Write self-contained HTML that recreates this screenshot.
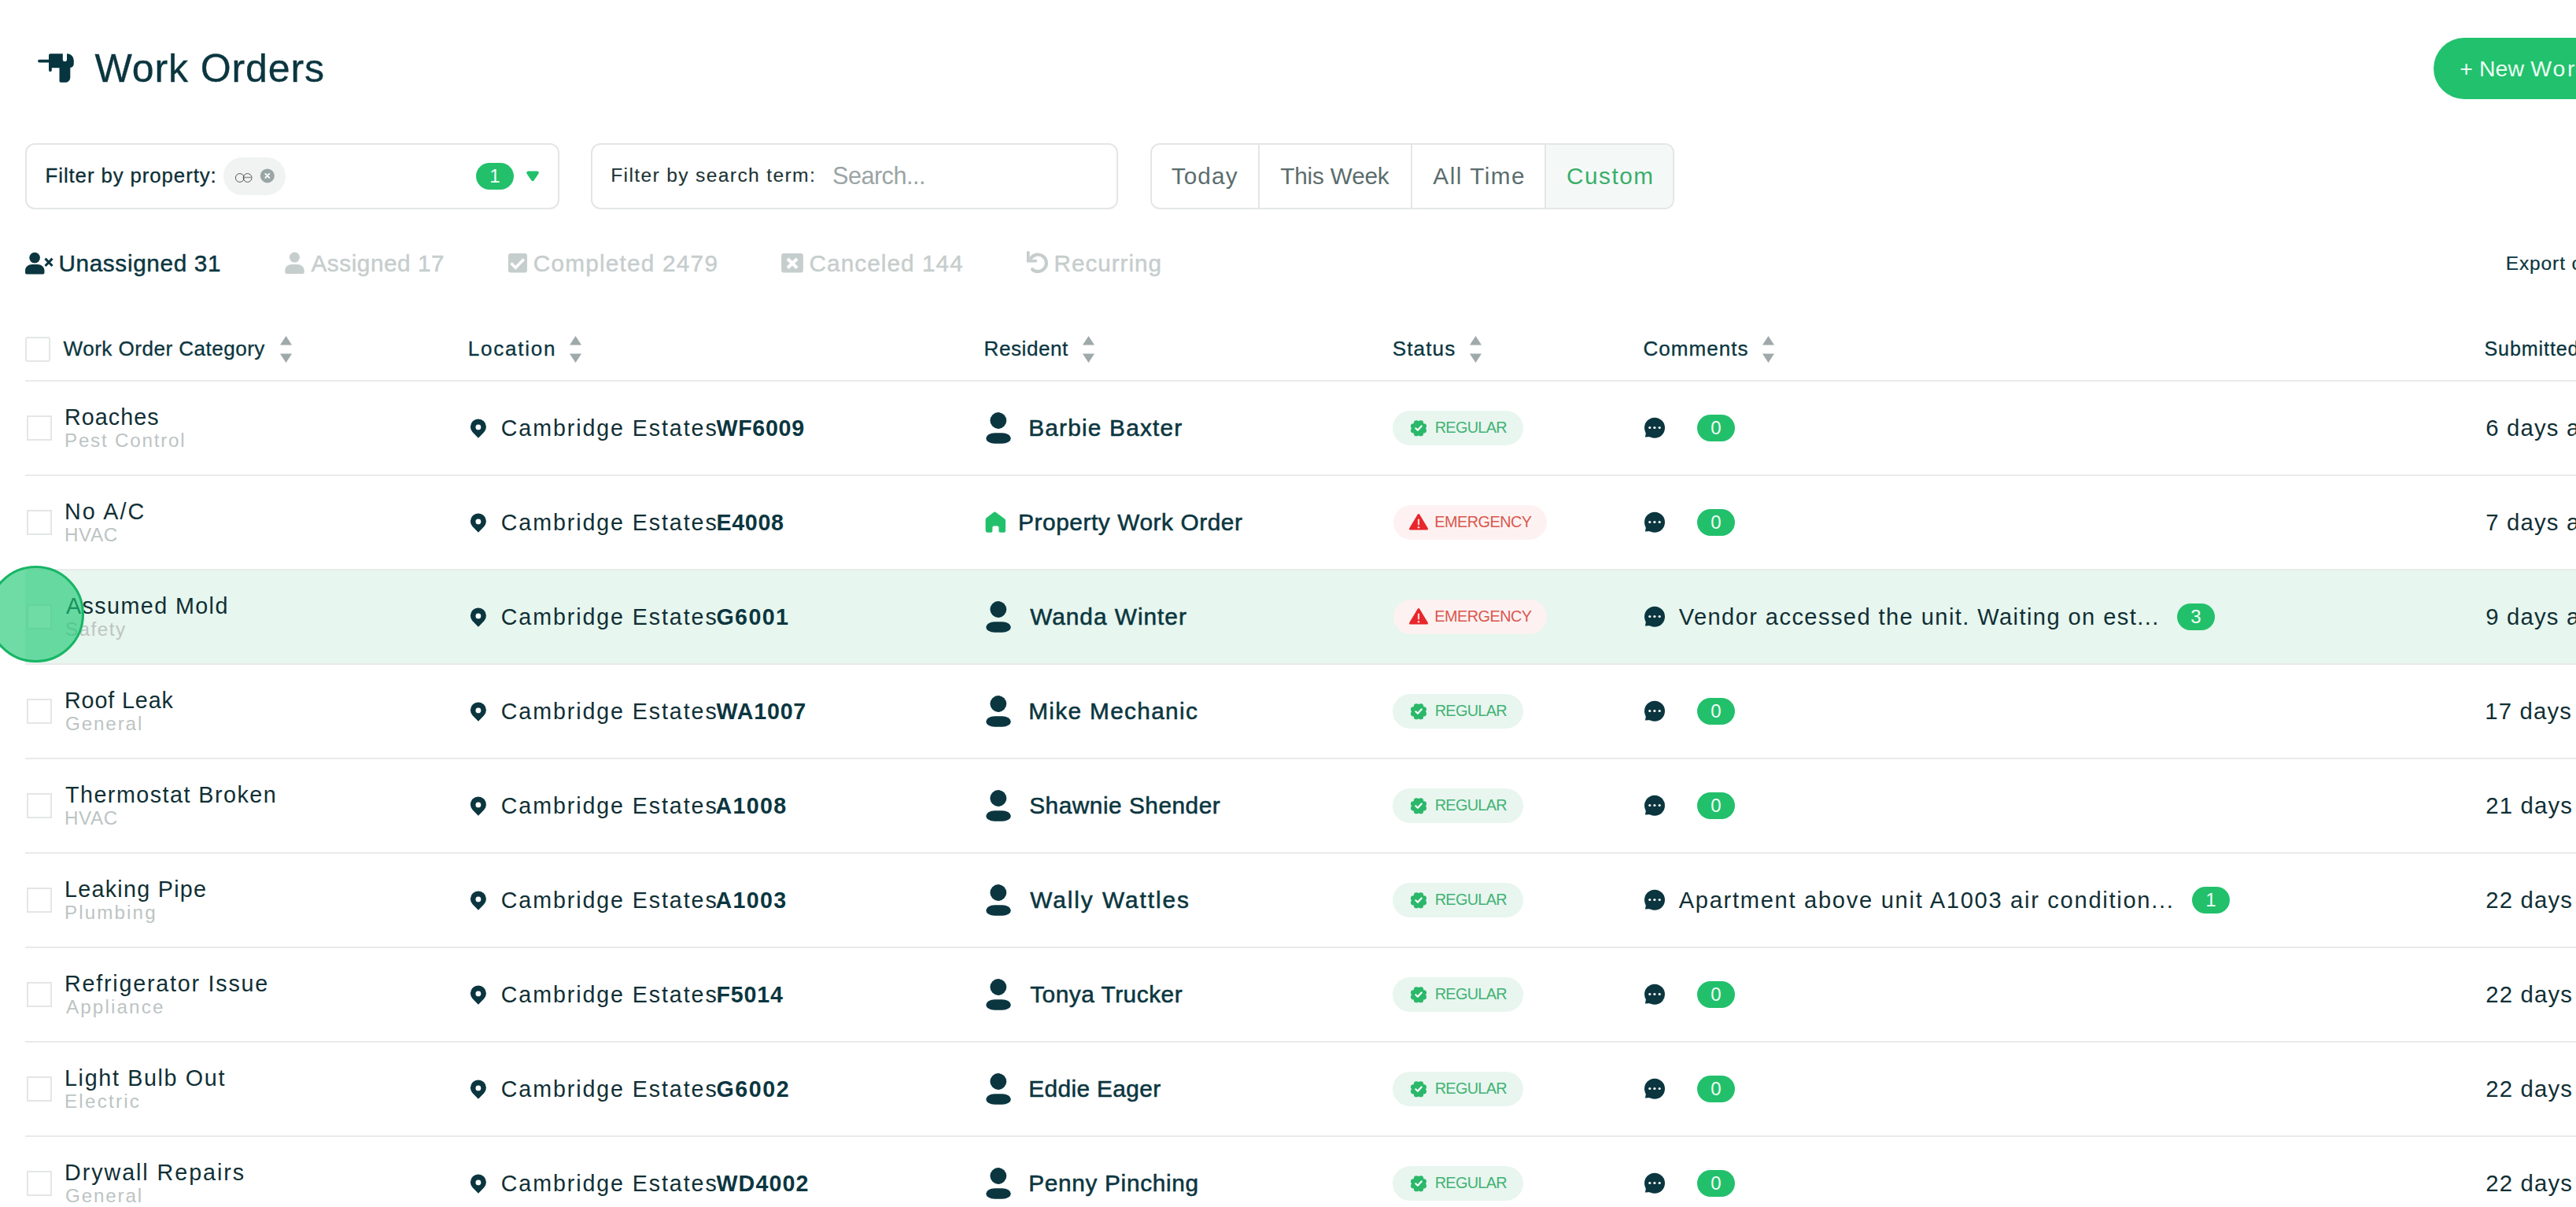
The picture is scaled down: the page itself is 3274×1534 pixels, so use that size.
<!DOCTYPE html>
<html><head><meta charset="utf-8"><title>Work Orders</title>
<style>
html,body{margin:0;padding:0;}
body{width:3274px;height:1534px;overflow:hidden;position:relative;background:#fff;font-family:"Liberation Sans",sans-serif;}
.a{position:absolute;}
.t{position:absolute;white-space:pre;line-height:1;font-family:"Liberation Sans",sans-serif;}
</style></head><body>
<svg class="a" style="left:40px;top:60px" width="60" height="52" viewBox="0 0 60 52"><path fill="#07353f" d="M24,8.2 H39.8 V15.4 A2.6,2.6 0 0 0 45,15.4 V8.2 H45.4 A8.4,8.4 0 0 1 53.8,16.6 V20.8 A5.2,5.2 0 0 1 49.3,26 V38.4 A6.4,6.4 0 0 1 42.9,44.8 H37.3 A1.8,1.8 0 0 1 35.5,43 V26.3 H25.8 V29.2 A1.9,1.9 0 0 1 22,29.2 V10.2 A2,2 0 0 1 24,8.2 Z"/><line x1="10" y1="17.6" x2="23" y2="17.6" stroke="#07353f" stroke-width="3.8" stroke-linecap="round"/></svg>
<div class="t" style="left:120.5px;top:61.8px;font-size:50.14px;letter-spacing:0.85px;color:#0b3640;-webkit-text-stroke:0.35px #0b3640;">Work Orders</div>
<div class="a" style="left:3093px;top:48px;width:400px;height:78px;background:#22c16d;border-radius:39px;"></div>
<div class="t" style="left:3126.2px;top:73.0px;font-size:28.41px;letter-spacing:0.13px;color:#ecfff3;">+ New <span style="letter-spacing:1.6px">W</span><span style="letter-spacing:2.6px">o</span>rk Order</div>
<div class="a" style="left:32px;top:182px;width:679px;height:84px;border:2px solid #e4e6e6;border-radius:12px;box-sizing:border-box;background:#fff;"></div>
<div class="t" style="left:57.6px;top:210.6px;font-size:25.8px;letter-spacing:0.91px;color:#0d2f35;-webkit-text-stroke:0.3px #0d2f35;">Filter by property:</div>
<div class="a" style="left:284px;top:200px;width:79px;height:48px;background:#f1f3f3;border-radius:24px;"></div>
<svg class="a" style="left:296px;top:217px" width="26" height="18" viewBox="0 0 26 18"><circle cx="8.8" cy="9" r="5.4" fill="none" stroke="#333" stroke-width="0.8"/><circle cx="18.6" cy="9" r="5.4" fill="none" stroke="#333" stroke-width="0.8"/><line x1="14" y1="8.5" x2="23" y2="8.5" stroke="#9a9a9a" stroke-width="1.6"/></svg>
<svg class="a" style="left:330px;top:214px" width="20" height="20" viewBox="0 0 20 20"><circle cx="9.8" cy="9.4" r="9" fill="#9aa6a6"/><path d="M7.3,6.9 L12.3,11.9 M12.3,6.9 L7.3,11.9" stroke="#fff" stroke-width="1.9" stroke-linecap="round"/></svg>
<div class="a" style="left:605px;top:207px;width:48px;height:34px;background:#22c06b;border-radius:17px;"></div>
<div class="t" style="left:605px;top:212px;width:48px;text-align:center;font-size:24px;color:#f2fff7;">1</div>
<svg class="a" style="left:666px;top:215px" width="22" height="18" viewBox="0 0 22 18"><path d="M5.2,4.6 H16.8 L11,13.2 Z" fill="#22c06b" stroke="#22c06b" stroke-width="4" stroke-linejoin="round"/></svg>
<div class="a" style="left:751px;top:182px;width:670px;height:84px;border:2px solid #e4e6e6;border-radius:12px;box-sizing:border-box;background:#fff;"></div>
<div class="t" style="left:776.2px;top:211.4px;font-size:24.64px;letter-spacing:1.35px;color:#1c3434;-webkit-text-stroke:0.1px #1c3434;">Filter by search term:</div>
<div class="t" style="left:1058.0px;top:208.3px;font-size:30.58px;letter-spacing:-0.50px;color:#9aa4a4;">Search...</div>
<div class="a" style="left:1462px;top:182px;width:666px;height:84px;border:2px solid #e4e6e6;border-radius:12px;box-sizing:border-box;background:#fff;"></div>
<div class="a" style="left:1964px;top:184px;width:162px;height:80px;background:#f4f9f7;border-radius:0 10px 10px 0;"></div>
<div class="a" style="left:1599px;top:184px;width:2px;height:80px;background:#e4e6e6;"></div>
<div class="a" style="left:1793px;top:184px;width:2px;height:80px;background:#e4e6e6;"></div>
<div class="a" style="left:1963px;top:184px;width:2px;height:80px;background:#e4e6e6;"></div>
<div class="t" style="left:1488.7px;top:209.0px;font-size:29.71px;letter-spacing:1.15px;color:#5b6d6d;">Today</div>
<div class="t" style="left:1627.3px;top:209.0px;font-size:29.71px;letter-spacing:-0.17px;color:#5b6d6d;">This Week</div>
<div class="t" style="left:1821.3px;top:209.0px;font-size:29.71px;letter-spacing:1.53px;color:#5b6d6d;">All Time</div>
<div class="t" style="left:1991.0px;top:209.0px;font-size:29.71px;letter-spacing:1.52px;color:#3aae6b;">Custom</div>
<svg class="a" style="left:26px;top:314px" width="46" height="40" viewBox="0 0 46 40"><circle cx="18.1" cy="13.6" r="6.8" fill="#0b3640"/><path d="M6,34.5 V30 C6,25 10,21.9 15,21.9 H21.5 C26.5,21.9 30.5,25 30.5,30 V32.5 A2,2 0 0 1 28.5,34.5 H8 A2,2 0 0 1 6,32.5 Z" fill="#0b3640"/><path d="M31.5,14.6 L40.5,24 M40.5,14.6 L31.5,24" stroke="#0b3640" stroke-width="3"/></svg>
<div class="t" style="left:74.4px;top:319.7px;font-size:29.71px;letter-spacing:0.66px;color:#0b3640;-webkit-text-stroke:0.45px #0b3640;">Unassigned 31</div>
<svg class="a" style="left:356px;top:314px" width="40" height="40" viewBox="0 0 40 40"><circle cx="18.4" cy="13.1" r="6.5" fill="#c6cdcd"/><path d="M6.3,34.1 V30 C6.3,25.2 10,22 15,22 H21.7 C26.7,22 30.7,25.2 30.7,30 V32.1 A2,2 0 0 1 28.7,34.1 H8.3 A2,2 0 0 1 6.3,32.1 Z" fill="#c6cdcd"/></svg>
<div class="t" style="left:395.5px;top:319.7px;font-size:29.71px;letter-spacing:0.55px;color:#c6cdcd;-webkit-text-stroke:0.45px #c6cdcd;">Assigned 17</div>
<svg class="a" style="left:640px;top:314px" width="40" height="40" viewBox="0 0 40 40"><rect x="6" y="8" width="24" height="24.6" rx="3" fill="#c6cdcd"/><path d="M9.5,20.5 L15.3,26.3 L25.8,15.6" fill="none" stroke="#fff" stroke-width="3.6"/></svg>
<div class="t" style="left:677.7px;top:319.7px;font-size:29.71px;letter-spacing:1.25px;color:#c6cdcd;-webkit-text-stroke:0.45px #c6cdcd;">Completed 2479</div>
<svg class="a" style="left:988px;top:314px" width="40" height="40" viewBox="0 0 40 40"><rect x="5.1" y="8.1" width="27.7" height="24.5" rx="3" fill="#c6cdcd"/><path d="M13,15 L25,26.5 M25,15 L13,26.5" stroke="#fff" stroke-width="4.2"/></svg>
<div class="t" style="left:1028.5px;top:319.7px;font-size:29.71px;letter-spacing:1.08px;color:#c6cdcd;-webkit-text-stroke:0.45px #c6cdcd;">Canceled 144</div>
<svg class="a" style="left:1298px;top:314px" width="40" height="40" viewBox="0 0 40 40"><path d="M14.06,28.34 A10.75,10.75 0 1 0 12.6,13.8" fill="none" stroke="#c6cdcd" stroke-width="4.2" stroke-linecap="round"/><path d="M8.8,6.8 V17.6 H18.4" fill="none" stroke="#c6cdcd" stroke-width="3.8" stroke-linecap="round"/></svg>
<div class="t" style="left:1339.5px;top:319.7px;font-size:29.71px;letter-spacing:0.97px;color:#c6cdcd;-webkit-text-stroke:0.45px #c6cdcd;">Recurring</div>
<div class="t" style="left:3184.7px;top:322.6px;font-size:24.49px;letter-spacing:0.90px;color:#0b3640;-webkit-text-stroke:0.2px #0b3640;">Export csv</div>
<div class="a" style="left:32px;top:428px;width:32px;height:32px;border:2px solid #e4e6e6;border-radius:3px;box-sizing:border-box;background:#fff;"></div>
<div class="t" style="left:80.6px;top:430.3px;font-size:26.09px;letter-spacing:0.47px;color:#0b3640;-webkit-text-stroke:0.3px #0b3640;">Work Order Category</div>
<svg class="a" style="left:355px;top:425px" width="18" height="38" viewBox="0 0 18 38"><path d="M1,13.5 L8.5,2 L16,13.5 Z M1,24.5 L8.5,36 L16,24.5 Z" fill="#9fa9a9"/></svg>
<div class="t" style="left:594.8px;top:430.3px;font-size:26.09px;letter-spacing:1.74px;color:#0b3640;-webkit-text-stroke:0.3px #0b3640;">Location</div>
<svg class="a" style="left:723px;top:425px" width="18" height="38" viewBox="0 0 18 38"><path d="M1,13.5 L8.5,2 L16,13.5 Z M1,24.5 L8.5,36 L16,24.5 Z" fill="#9fa9a9"/></svg>
<div class="t" style="left:1250.6px;top:430.3px;font-size:26.09px;letter-spacing:0.54px;color:#0b3640;-webkit-text-stroke:0.3px #0b3640;">Resident</div>
<svg class="a" style="left:1375px;top:425px" width="18" height="38" viewBox="0 0 18 38"><path d="M1,13.5 L8.5,2 L16,13.5 Z M1,24.5 L8.5,36 L16,24.5 Z" fill="#9fa9a9"/></svg>
<div class="t" style="left:1769.7px;top:430.3px;font-size:26.09px;letter-spacing:1.12px;color:#0b3640;-webkit-text-stroke:0.3px #0b3640;">Status</div>
<svg class="a" style="left:1867px;top:425px" width="18" height="38" viewBox="0 0 18 38"><path d="M1,13.5 L8.5,2 L16,13.5 Z M1,24.5 L8.5,36 L16,24.5 Z" fill="#9fa9a9"/></svg>
<div class="t" style="left:2088.4px;top:430.3px;font-size:26.09px;letter-spacing:1.00px;color:#0b3640;-webkit-text-stroke:0.3px #0b3640;">Comments</div>
<svg class="a" style="left:2239px;top:425px" width="18" height="38" viewBox="0 0 18 38"><path d="M1,13.5 L8.5,2 L16,13.5 Z M1,24.5 L8.5,36 L16,24.5 Z" fill="#9fa9a9"/></svg>
<div class="t" style="left:3157.5px;top:431.0px;font-size:25.07px;letter-spacing:0.90px;color:#0b3640;-webkit-text-stroke:0.3px #0b3640;">Submitted</div>
<div class="a" style="left:32px;top:483px;width:3242px;height:2px;background:#e9eaea;"></div>
<div class="a" style="left:34px;top:528px;width:32px;height:32px;border:2px solid #e4e6e6;box-sizing:border-box;background:#fff;"></div>
<div class="t" style="left:82.0px;top:515.6px;font-size:28.7px;letter-spacing:1.07px;color:#102f35;">Roaches</div>
<div class="t" style="left:82.0px;top:548.2px;font-size:24.2px;letter-spacing:1.77px;color:#bcc4c4;">Pest Control</div>
<svg class="a" style="left:596px;top:531px" width="24" height="28" viewBox="0 0 24 28"><path d="M11.9,25.7 L4.6,18.3 A10,10 0 1 1 19.2,18.3 Z" fill="#0b3640"/><circle cx="11.9" cy="11.9" r="3.4" fill="#fff"/></svg>
<div class="t" style="left:636.8px;top:529.6px;font-size:28.6px;letter-spacing:1.92px;color:#102f35;">Cambridge Estates</div>
<div class="t" style="left:910.5px;top:529.6px;font-size:28.6px;letter-spacing:0.70px;color:#0b3640;font-weight:700;">WF6009</div>
<svg class="a" style="left:1250px;top:522px" width="38" height="44" viewBox="0 0 38 44"><circle cx="18.8" cy="12.5" r="10.4" fill="#0b3640"/><rect x="3.2" y="28.3" width="31.6" height="13.4" rx="11" ry="6.7" fill="#0b3640"/></svg>
<div class="t" style="left:1307.2px;top:529.1px;font-size:29.8px;letter-spacing:1.21px;color:#0b3640;-webkit-text-stroke:0.55px #0b3640;">Barbie Baxter</div>
<div class="a" style="left:1770px;top:522px;width:166px;height:44px;background:#e8f6ef;border-radius:22px;"></div>
<svg class="a" style="left:1790px;top:532px" width="26" height="26" viewBox="0 0 26 26"><g fill="#2bb86a"><circle cx="13" cy="12.3" r="8.4"/><circle cx="19.65" cy="15.06" r="3.4"/><circle cx="15.76" cy="18.95" r="3.4"/><circle cx="10.24" cy="18.95" r="3.4"/><circle cx="6.35" cy="15.06" r="3.4"/><circle cx="6.35" cy="9.54" r="3.4"/><circle cx="10.24" cy="5.65" r="3.4"/><circle cx="15.76" cy="5.65" r="3.4"/><circle cx="19.65" cy="9.54" r="3.4"/></g><path d="M9.3,12.3 L11.9,14.7 L16.7,9.5" fill="none" stroke="#fff" stroke-width="2.2" stroke-linecap="round" stroke-linejoin="round"/></svg>
<div class="t" style="left:1823.7px;top:534.1px;font-size:19.86px;letter-spacing:-0.68px;color:#43b275;">REGULAR</div>
<svg class="a" style="left:2086px;top:528px" width="32" height="32" viewBox="0 0 32 32"><circle cx="17" cy="15.8" r="13" fill="#0b3640"/><path d="M4.9,27.6 L6.5,19 L13,27 Z" fill="#0b3640"/><circle cx="10.8" cy="15.5" r="1.6" fill="#fff"/><circle cx="16.9" cy="15.5" r="1.6" fill="#fff"/><circle cx="23.2" cy="15.5" r="1.6" fill="#fff"/></svg>
<div class="a" style="left:2157px;top:527px;width:48px;height:34px;background:#22c06b;border-radius:17px;"></div>
<div class="t" style="left:2157px;top:532px;width:48px;text-align:center;font-size:24px;color:#f2fff7;">0</div>
<div class="t" style="left:3159.2px;top:529.0px;font-size:29.3px;letter-spacing:1.20px;color:#102f35;">6 days ago</div>
<div class="a" style="left:32px;top:603px;width:3242px;height:2px;background:#e9eaea;"></div>
<div class="a" style="left:34px;top:648px;width:32px;height:32px;border:2px solid #e4e6e6;box-sizing:border-box;background:#fff;"></div>
<div class="t" style="left:82.0px;top:635.6px;font-size:28.7px;letter-spacing:2.06px;color:#102f35;">No A/C</div>
<div class="t" style="left:82.0px;top:668.2px;font-size:24.2px;letter-spacing:0.63px;color:#bcc4c4;">HVAC</div>
<svg class="a" style="left:596px;top:651px" width="24" height="28" viewBox="0 0 24 28"><path d="M11.9,25.7 L4.6,18.3 A10,10 0 1 1 19.2,18.3 Z" fill="#0b3640"/><circle cx="11.9" cy="11.9" r="3.4" fill="#fff"/></svg>
<div class="t" style="left:636.8px;top:649.6px;font-size:28.6px;letter-spacing:1.92px;color:#102f35;">Cambridge Estates</div>
<div class="t" style="left:910.5px;top:649.6px;font-size:28.6px;letter-spacing:0.70px;color:#0b3640;font-weight:700;">E4008</div>
<svg class="a" style="left:1250px;top:644px" width="32" height="36" viewBox="0 0 32 36"><path d="M5,32.8 A2.6,2.6 0 0 1 2.6,30.2 V16.4 A3,3 0 0 1 3.6,14.2 L12.4,7.4 A3,3 0 0 1 16.2,7.4 L27,15.6 A3,3 0 0 1 28,17.8 V30.2 A2.6,2.6 0 0 1 25.4,32.8 H22 A2.6,2.6 0 0 1 19.4,30.2 V26.2 A1.8,1.8 0 0 0 17.6,24.4 H13.2 A1.8,1.8 0 0 0 11.4,26.2 V30.2 A2.6,2.6 0 0 1 8.8,32.8 Z" fill="#23c06b"/></svg>
<div class="t" style="left:1294.0px;top:649.1px;font-size:29.8px;letter-spacing:0.59px;color:#0b3640;-webkit-text-stroke:0.55px #0b3640;">Property Work Order</div>
<div class="a" style="left:1771px;top:642px;width:195px;height:44px;background:#fdf2f1;border-radius:22px;"></div>
<svg class="a" style="left:1790px;top:652px" width="26" height="24" viewBox="0 0 26 24"><path d="M11.5,2.2 Q13,0 14.5,2.2 L24.6,19 Q25.8,21.6 23,21.6 H3 Q0.2,21.6 1.4,19 Z" fill="#e8262b"/><rect x="11.9" y="7.6" width="2.2" height="8" rx="1" fill="#ffd9d9"/><circle cx="13" cy="18.3" r="1.3" fill="#ffd9d9"/></svg>
<div class="t" style="left:1823.3px;top:654.1px;font-size:19.86px;letter-spacing:-0.54px;color:#d9574f;">EMERGENCY</div>
<svg class="a" style="left:2086px;top:648px" width="32" height="32" viewBox="0 0 32 32"><circle cx="17" cy="15.8" r="13" fill="#0b3640"/><path d="M4.9,27.6 L6.5,19 L13,27 Z" fill="#0b3640"/><circle cx="10.8" cy="15.5" r="1.6" fill="#fff"/><circle cx="16.9" cy="15.5" r="1.6" fill="#fff"/><circle cx="23.2" cy="15.5" r="1.6" fill="#fff"/></svg>
<div class="a" style="left:2157px;top:647px;width:48px;height:34px;background:#22c06b;border-radius:17px;"></div>
<div class="t" style="left:2157px;top:652px;width:48px;text-align:center;font-size:24px;color:#f2fff7;">0</div>
<div class="t" style="left:3159.2px;top:649.0px;font-size:29.3px;letter-spacing:1.20px;color:#102f35;">7 days ago</div>
<div class="a" style="left:32px;top:723px;width:3242px;height:2px;background:#e9eaea;"></div>
<div class="a" style="left:32px;top:725px;width:3242px;height:118px;background:#e7f6ee;"></div>
<div class="a" style="left:34px;top:768px;width:32px;height:32px;border:2px solid #e4e6e6;box-sizing:border-box;background:#fff;"></div>
<div class="t" style="left:84.0px;top:755.6px;font-size:28.7px;letter-spacing:1.42px;color:#102f35;">Assumed Mold</div>
<div class="t" style="left:83.0px;top:788.2px;font-size:24.2px;letter-spacing:1.48px;color:#bcc4c4;">Safety</div>
<svg class="a" style="left:596px;top:771px" width="24" height="28" viewBox="0 0 24 28"><path d="M11.9,25.7 L4.6,18.3 A10,10 0 1 1 19.2,18.3 Z" fill="#0b3640"/><circle cx="11.9" cy="11.9" r="3.4" fill="#fff"/></svg>
<div class="t" style="left:636.8px;top:769.6px;font-size:28.6px;letter-spacing:1.92px;color:#102f35;">Cambridge Estates</div>
<div class="t" style="left:910.5px;top:769.6px;font-size:28.6px;letter-spacing:1.38px;color:#0b3640;font-weight:700;">G6001</div>
<svg class="a" style="left:1250px;top:762px" width="38" height="44" viewBox="0 0 38 44"><circle cx="18.8" cy="12.5" r="10.4" fill="#0b3640"/><rect x="3.2" y="28.3" width="31.6" height="13.4" rx="11" ry="6.7" fill="#0b3640"/></svg>
<div class="t" style="left:1309.2px;top:769.1px;font-size:29.8px;letter-spacing:1.00px;color:#0b3640;-webkit-text-stroke:0.55px #0b3640;">Wanda Winter</div>
<div class="a" style="left:1771px;top:762px;width:195px;height:44px;background:#fdf2f1;border-radius:22px;"></div>
<svg class="a" style="left:1790px;top:772px" width="26" height="24" viewBox="0 0 26 24"><path d="M11.5,2.2 Q13,0 14.5,2.2 L24.6,19 Q25.8,21.6 23,21.6 H3 Q0.2,21.6 1.4,19 Z" fill="#e8262b"/><rect x="11.9" y="7.6" width="2.2" height="8" rx="1" fill="#ffd9d9"/><circle cx="13" cy="18.3" r="1.3" fill="#ffd9d9"/></svg>
<div class="t" style="left:1823.3px;top:774.1px;font-size:19.86px;letter-spacing:-0.54px;color:#d9574f;">EMERGENCY</div>
<svg class="a" style="left:2086px;top:768px" width="32" height="32" viewBox="0 0 32 32"><circle cx="17" cy="15.8" r="13" fill="#0b3640"/><path d="M4.9,27.6 L6.5,19 L13,27 Z" fill="#0b3640"/><circle cx="10.8" cy="15.5" r="1.6" fill="#fff"/><circle cx="16.9" cy="15.5" r="1.6" fill="#fff"/><circle cx="23.2" cy="15.5" r="1.6" fill="#fff"/></svg>
<div class="t" style="left:2133.7px;top:769.6px;font-size:29.1px;letter-spacing:1.41px;color:#102f35;">Vendor accessed the unit. Waiting on est...</div>
<div class="a" style="left:2767px;top:767px;width:48px;height:34px;background:#22c06b;border-radius:17px;"></div>
<div class="t" style="left:2767px;top:772px;width:48px;text-align:center;font-size:24px;color:#f2fff7;">3</div>
<div class="t" style="left:3159.2px;top:769.0px;font-size:29.3px;letter-spacing:1.20px;color:#102f35;">9 days ago</div>
<div class="a" style="left:32px;top:843px;width:3242px;height:2px;background:#e9eaea;"></div>
<div class="a" style="left:34px;top:888px;width:32px;height:32px;border:2px solid #e4e6e6;box-sizing:border-box;background:#fff;"></div>
<div class="t" style="left:82.0px;top:875.6px;font-size:28.7px;letter-spacing:0.88px;color:#102f35;">Roof Leak</div>
<div class="t" style="left:83.0px;top:908.2px;font-size:24.2px;letter-spacing:1.88px;color:#bcc4c4;">General</div>
<svg class="a" style="left:596px;top:891px" width="24" height="28" viewBox="0 0 24 28"><path d="M11.9,25.7 L4.6,18.3 A10,10 0 1 1 19.2,18.3 Z" fill="#0b3640"/><circle cx="11.9" cy="11.9" r="3.4" fill="#fff"/></svg>
<div class="t" style="left:636.8px;top:889.6px;font-size:28.6px;letter-spacing:1.92px;color:#102f35;">Cambridge Estates</div>
<div class="t" style="left:910.5px;top:889.6px;font-size:28.6px;letter-spacing:0.82px;color:#0b3640;font-weight:700;">WA1007</div>
<svg class="a" style="left:1250px;top:882px" width="38" height="44" viewBox="0 0 38 44"><circle cx="18.8" cy="12.5" r="10.4" fill="#0b3640"/><rect x="3.2" y="28.3" width="31.6" height="13.4" rx="11" ry="6.7" fill="#0b3640"/></svg>
<div class="t" style="left:1307.2px;top:889.1px;font-size:29.8px;letter-spacing:1.33px;color:#0b3640;-webkit-text-stroke:0.55px #0b3640;">Mike Mechanic</div>
<div class="a" style="left:1770px;top:882px;width:166px;height:44px;background:#e8f6ef;border-radius:22px;"></div>
<svg class="a" style="left:1790px;top:892px" width="26" height="26" viewBox="0 0 26 26"><g fill="#2bb86a"><circle cx="13" cy="12.3" r="8.4"/><circle cx="19.65" cy="15.06" r="3.4"/><circle cx="15.76" cy="18.95" r="3.4"/><circle cx="10.24" cy="18.95" r="3.4"/><circle cx="6.35" cy="15.06" r="3.4"/><circle cx="6.35" cy="9.54" r="3.4"/><circle cx="10.24" cy="5.65" r="3.4"/><circle cx="15.76" cy="5.65" r="3.4"/><circle cx="19.65" cy="9.54" r="3.4"/></g><path d="M9.3,12.3 L11.9,14.7 L16.7,9.5" fill="none" stroke="#fff" stroke-width="2.2" stroke-linecap="round" stroke-linejoin="round"/></svg>
<div class="t" style="left:1823.7px;top:894.1px;font-size:19.86px;letter-spacing:-0.68px;color:#43b275;">REGULAR</div>
<svg class="a" style="left:2086px;top:888px" width="32" height="32" viewBox="0 0 32 32"><circle cx="17" cy="15.8" r="13" fill="#0b3640"/><path d="M4.9,27.6 L6.5,19 L13,27 Z" fill="#0b3640"/><circle cx="10.8" cy="15.5" r="1.6" fill="#fff"/><circle cx="16.9" cy="15.5" r="1.6" fill="#fff"/><circle cx="23.2" cy="15.5" r="1.6" fill="#fff"/></svg>
<div class="a" style="left:2157px;top:887px;width:48px;height:34px;background:#22c06b;border-radius:17px;"></div>
<div class="t" style="left:2157px;top:892px;width:48px;text-align:center;font-size:24px;color:#f2fff7;">0</div>
<div class="t" style="left:3158.2px;top:889.0px;font-size:29.3px;letter-spacing:1.20px;color:#102f35;">17 days ago</div>
<div class="a" style="left:32px;top:963px;width:3242px;height:2px;background:#e9eaea;"></div>
<div class="a" style="left:34px;top:1008px;width:32px;height:32px;border:2px solid #e4e6e6;box-sizing:border-box;background:#fff;"></div>
<div class="t" style="left:83.0px;top:995.6px;font-size:28.7px;letter-spacing:1.48px;color:#102f35;">Thermostat Broken</div>
<div class="t" style="left:82.0px;top:1028.2px;font-size:24.2px;letter-spacing:0.63px;color:#bcc4c4;">HVAC</div>
<svg class="a" style="left:596px;top:1011px" width="24" height="28" viewBox="0 0 24 28"><path d="M11.9,25.7 L4.6,18.3 A10,10 0 1 1 19.2,18.3 Z" fill="#0b3640"/><circle cx="11.9" cy="11.9" r="3.4" fill="#fff"/></svg>
<div class="t" style="left:636.8px;top:1009.6px;font-size:28.6px;letter-spacing:1.92px;color:#102f35;">Cambridge Estates</div>
<div class="t" style="left:909.5px;top:1009.6px;font-size:28.6px;letter-spacing:1.35px;color:#0b3640;font-weight:700;">A1008</div>
<svg class="a" style="left:1250px;top:1002px" width="38" height="44" viewBox="0 0 38 44"><circle cx="18.8" cy="12.5" r="10.4" fill="#0b3640"/><rect x="3.2" y="28.3" width="31.6" height="13.4" rx="11" ry="6.7" fill="#0b3640"/></svg>
<div class="t" style="left:1308.2px;top:1009.1px;font-size:29.8px;letter-spacing:0.52px;color:#0b3640;-webkit-text-stroke:0.55px #0b3640;">Shawnie Shender</div>
<div class="a" style="left:1770px;top:1002px;width:166px;height:44px;background:#e8f6ef;border-radius:22px;"></div>
<svg class="a" style="left:1790px;top:1012px" width="26" height="26" viewBox="0 0 26 26"><g fill="#2bb86a"><circle cx="13" cy="12.3" r="8.4"/><circle cx="19.65" cy="15.06" r="3.4"/><circle cx="15.76" cy="18.95" r="3.4"/><circle cx="10.24" cy="18.95" r="3.4"/><circle cx="6.35" cy="15.06" r="3.4"/><circle cx="6.35" cy="9.54" r="3.4"/><circle cx="10.24" cy="5.65" r="3.4"/><circle cx="15.76" cy="5.65" r="3.4"/><circle cx="19.65" cy="9.54" r="3.4"/></g><path d="M9.3,12.3 L11.9,14.7 L16.7,9.5" fill="none" stroke="#fff" stroke-width="2.2" stroke-linecap="round" stroke-linejoin="round"/></svg>
<div class="t" style="left:1823.7px;top:1014.1px;font-size:19.86px;letter-spacing:-0.68px;color:#43b275;">REGULAR</div>
<svg class="a" style="left:2086px;top:1008px" width="32" height="32" viewBox="0 0 32 32"><circle cx="17" cy="15.8" r="13" fill="#0b3640"/><path d="M4.9,27.6 L6.5,19 L13,27 Z" fill="#0b3640"/><circle cx="10.8" cy="15.5" r="1.6" fill="#fff"/><circle cx="16.9" cy="15.5" r="1.6" fill="#fff"/><circle cx="23.2" cy="15.5" r="1.6" fill="#fff"/></svg>
<div class="a" style="left:2157px;top:1007px;width:48px;height:34px;background:#22c06b;border-radius:17px;"></div>
<div class="t" style="left:2157px;top:1012px;width:48px;text-align:center;font-size:24px;color:#f2fff7;">0</div>
<div class="t" style="left:3159.2px;top:1009.0px;font-size:29.3px;letter-spacing:1.20px;color:#102f35;">21 days ago</div>
<div class="a" style="left:32px;top:1083px;width:3242px;height:2px;background:#e9eaea;"></div>
<div class="a" style="left:34px;top:1128px;width:32px;height:32px;border:2px solid #e4e6e6;box-sizing:border-box;background:#fff;"></div>
<div class="t" style="left:82.0px;top:1115.6px;font-size:28.7px;letter-spacing:1.29px;color:#102f35;">Leaking Pipe</div>
<div class="t" style="left:82.0px;top:1148.2px;font-size:24.2px;letter-spacing:2.11px;color:#bcc4c4;">Plumbing</div>
<svg class="a" style="left:596px;top:1131px" width="24" height="28" viewBox="0 0 24 28"><path d="M11.9,25.7 L4.6,18.3 A10,10 0 1 1 19.2,18.3 Z" fill="#0b3640"/><circle cx="11.9" cy="11.9" r="3.4" fill="#fff"/></svg>
<div class="t" style="left:636.8px;top:1129.6px;font-size:28.6px;letter-spacing:1.92px;color:#102f35;">Cambridge Estates</div>
<div class="t" style="left:909.5px;top:1129.6px;font-size:28.6px;letter-spacing:1.35px;color:#0b3640;font-weight:700;">A1003</div>
<svg class="a" style="left:1250px;top:1122px" width="38" height="44" viewBox="0 0 38 44"><circle cx="18.8" cy="12.5" r="10.4" fill="#0b3640"/><rect x="3.2" y="28.3" width="31.6" height="13.4" rx="11" ry="6.7" fill="#0b3640"/></svg>
<div class="t" style="left:1309.2px;top:1129.1px;font-size:29.8px;letter-spacing:1.96px;color:#0b3640;-webkit-text-stroke:0.55px #0b3640;">Wally Wattles</div>
<div class="a" style="left:1770px;top:1122px;width:166px;height:44px;background:#e8f6ef;border-radius:22px;"></div>
<svg class="a" style="left:1790px;top:1132px" width="26" height="26" viewBox="0 0 26 26"><g fill="#2bb86a"><circle cx="13" cy="12.3" r="8.4"/><circle cx="19.65" cy="15.06" r="3.4"/><circle cx="15.76" cy="18.95" r="3.4"/><circle cx="10.24" cy="18.95" r="3.4"/><circle cx="6.35" cy="15.06" r="3.4"/><circle cx="6.35" cy="9.54" r="3.4"/><circle cx="10.24" cy="5.65" r="3.4"/><circle cx="15.76" cy="5.65" r="3.4"/><circle cx="19.65" cy="9.54" r="3.4"/></g><path d="M9.3,12.3 L11.9,14.7 L16.7,9.5" fill="none" stroke="#fff" stroke-width="2.2" stroke-linecap="round" stroke-linejoin="round"/></svg>
<div class="t" style="left:1823.7px;top:1134.1px;font-size:19.86px;letter-spacing:-0.68px;color:#43b275;">REGULAR</div>
<svg class="a" style="left:2086px;top:1128px" width="32" height="32" viewBox="0 0 32 32"><circle cx="17" cy="15.8" r="13" fill="#0b3640"/><path d="M4.9,27.6 L6.5,19 L13,27 Z" fill="#0b3640"/><circle cx="10.8" cy="15.5" r="1.6" fill="#fff"/><circle cx="16.9" cy="15.5" r="1.6" fill="#fff"/><circle cx="23.2" cy="15.5" r="1.6" fill="#fff"/></svg>
<div class="t" style="left:2133.7px;top:1129.6px;font-size:29.1px;letter-spacing:1.71px;color:#102f35;">Apartment above unit A1003 air condition...</div>
<div class="a" style="left:2786px;top:1127px;width:48px;height:34px;background:#22c06b;border-radius:17px;"></div>
<div class="t" style="left:2786px;top:1132px;width:48px;text-align:center;font-size:24px;color:#f2fff7;">1</div>
<div class="t" style="left:3159.2px;top:1129.0px;font-size:29.3px;letter-spacing:1.20px;color:#102f35;">22 days ago</div>
<div class="a" style="left:32px;top:1203px;width:3242px;height:2px;background:#e9eaea;"></div>
<div class="a" style="left:34px;top:1248px;width:32px;height:32px;border:2px solid #e4e6e6;box-sizing:border-box;background:#fff;"></div>
<div class="t" style="left:82.0px;top:1235.6px;font-size:28.7px;letter-spacing:1.78px;color:#102f35;">Refrigerator Issue</div>
<div class="t" style="left:84.0px;top:1268.2px;font-size:24.2px;letter-spacing:2.14px;color:#bcc4c4;">Appliance</div>
<svg class="a" style="left:596px;top:1251px" width="24" height="28" viewBox="0 0 24 28"><path d="M11.9,25.7 L4.6,18.3 A10,10 0 1 1 19.2,18.3 Z" fill="#0b3640"/><circle cx="11.9" cy="11.9" r="3.4" fill="#fff"/></svg>
<div class="t" style="left:636.8px;top:1249.6px;font-size:28.6px;letter-spacing:1.92px;color:#102f35;">Cambridge Estates</div>
<div class="t" style="left:910.5px;top:1249.6px;font-size:28.6px;letter-spacing:0.82px;color:#0b3640;font-weight:700;">F5014</div>
<svg class="a" style="left:1250px;top:1242px" width="38" height="44" viewBox="0 0 38 44"><circle cx="18.8" cy="12.5" r="10.4" fill="#0b3640"/><rect x="3.2" y="28.3" width="31.6" height="13.4" rx="11" ry="6.7" fill="#0b3640"/></svg>
<div class="t" style="left:1309.2px;top:1249.1px;font-size:29.8px;letter-spacing:0.52px;color:#0b3640;-webkit-text-stroke:0.55px #0b3640;">Tonya Trucker</div>
<div class="a" style="left:1770px;top:1242px;width:166px;height:44px;background:#e8f6ef;border-radius:22px;"></div>
<svg class="a" style="left:1790px;top:1252px" width="26" height="26" viewBox="0 0 26 26"><g fill="#2bb86a"><circle cx="13" cy="12.3" r="8.4"/><circle cx="19.65" cy="15.06" r="3.4"/><circle cx="15.76" cy="18.95" r="3.4"/><circle cx="10.24" cy="18.95" r="3.4"/><circle cx="6.35" cy="15.06" r="3.4"/><circle cx="6.35" cy="9.54" r="3.4"/><circle cx="10.24" cy="5.65" r="3.4"/><circle cx="15.76" cy="5.65" r="3.4"/><circle cx="19.65" cy="9.54" r="3.4"/></g><path d="M9.3,12.3 L11.9,14.7 L16.7,9.5" fill="none" stroke="#fff" stroke-width="2.2" stroke-linecap="round" stroke-linejoin="round"/></svg>
<div class="t" style="left:1823.7px;top:1254.1px;font-size:19.86px;letter-spacing:-0.68px;color:#43b275;">REGULAR</div>
<svg class="a" style="left:2086px;top:1248px" width="32" height="32" viewBox="0 0 32 32"><circle cx="17" cy="15.8" r="13" fill="#0b3640"/><path d="M4.9,27.6 L6.5,19 L13,27 Z" fill="#0b3640"/><circle cx="10.8" cy="15.5" r="1.6" fill="#fff"/><circle cx="16.9" cy="15.5" r="1.6" fill="#fff"/><circle cx="23.2" cy="15.5" r="1.6" fill="#fff"/></svg>
<div class="a" style="left:2157px;top:1247px;width:48px;height:34px;background:#22c06b;border-radius:17px;"></div>
<div class="t" style="left:2157px;top:1252px;width:48px;text-align:center;font-size:24px;color:#f2fff7;">0</div>
<div class="t" style="left:3159.2px;top:1249.0px;font-size:29.3px;letter-spacing:1.20px;color:#102f35;">22 days ago</div>
<div class="a" style="left:32px;top:1323px;width:3242px;height:2px;background:#e9eaea;"></div>
<div class="a" style="left:34px;top:1368px;width:32px;height:32px;border:2px solid #e4e6e6;box-sizing:border-box;background:#fff;"></div>
<div class="t" style="left:82.0px;top:1355.6px;font-size:28.7px;letter-spacing:1.66px;color:#102f35;">Light Bulb Out</div>
<div class="t" style="left:82.0px;top:1388.2px;font-size:24.2px;letter-spacing:2.23px;color:#bcc4c4;">Electric</div>
<svg class="a" style="left:596px;top:1371px" width="24" height="28" viewBox="0 0 24 28"><path d="M11.9,25.7 L4.6,18.3 A10,10 0 1 1 19.2,18.3 Z" fill="#0b3640"/><circle cx="11.9" cy="11.9" r="3.4" fill="#fff"/></svg>
<div class="t" style="left:636.8px;top:1369.6px;font-size:28.6px;letter-spacing:1.92px;color:#102f35;">Cambridge Estates</div>
<div class="t" style="left:910.5px;top:1369.6px;font-size:28.6px;letter-spacing:1.55px;color:#0b3640;font-weight:700;">G6002</div>
<svg class="a" style="left:1250px;top:1362px" width="38" height="44" viewBox="0 0 38 44"><circle cx="18.8" cy="12.5" r="10.4" fill="#0b3640"/><rect x="3.2" y="28.3" width="31.6" height="13.4" rx="11" ry="6.7" fill="#0b3640"/></svg>
<div class="t" style="left:1307.2px;top:1369.1px;font-size:29.8px;letter-spacing:0.40px;color:#0b3640;-webkit-text-stroke:0.55px #0b3640;">Eddie Eager</div>
<div class="a" style="left:1770px;top:1362px;width:166px;height:44px;background:#e8f6ef;border-radius:22px;"></div>
<svg class="a" style="left:1790px;top:1372px" width="26" height="26" viewBox="0 0 26 26"><g fill="#2bb86a"><circle cx="13" cy="12.3" r="8.4"/><circle cx="19.65" cy="15.06" r="3.4"/><circle cx="15.76" cy="18.95" r="3.4"/><circle cx="10.24" cy="18.95" r="3.4"/><circle cx="6.35" cy="15.06" r="3.4"/><circle cx="6.35" cy="9.54" r="3.4"/><circle cx="10.24" cy="5.65" r="3.4"/><circle cx="15.76" cy="5.65" r="3.4"/><circle cx="19.65" cy="9.54" r="3.4"/></g><path d="M9.3,12.3 L11.9,14.7 L16.7,9.5" fill="none" stroke="#fff" stroke-width="2.2" stroke-linecap="round" stroke-linejoin="round"/></svg>
<div class="t" style="left:1823.7px;top:1374.1px;font-size:19.86px;letter-spacing:-0.68px;color:#43b275;">REGULAR</div>
<svg class="a" style="left:2086px;top:1368px" width="32" height="32" viewBox="0 0 32 32"><circle cx="17" cy="15.8" r="13" fill="#0b3640"/><path d="M4.9,27.6 L6.5,19 L13,27 Z" fill="#0b3640"/><circle cx="10.8" cy="15.5" r="1.6" fill="#fff"/><circle cx="16.9" cy="15.5" r="1.6" fill="#fff"/><circle cx="23.2" cy="15.5" r="1.6" fill="#fff"/></svg>
<div class="a" style="left:2157px;top:1367px;width:48px;height:34px;background:#22c06b;border-radius:17px;"></div>
<div class="t" style="left:2157px;top:1372px;width:48px;text-align:center;font-size:24px;color:#f2fff7;">0</div>
<div class="t" style="left:3159.2px;top:1369.0px;font-size:29.3px;letter-spacing:1.20px;color:#102f35;">22 days ago</div>
<div class="a" style="left:32px;top:1443px;width:3242px;height:2px;background:#e9eaea;"></div>
<div class="a" style="left:34px;top:1488px;width:32px;height:32px;border:2px solid #e4e6e6;box-sizing:border-box;background:#fff;"></div>
<div class="t" style="left:82.0px;top:1475.6px;font-size:28.7px;letter-spacing:1.95px;color:#102f35;">Drywall Repairs</div>
<div class="t" style="left:83.0px;top:1508.2px;font-size:24.2px;letter-spacing:1.85px;color:#bcc4c4;">General</div>
<svg class="a" style="left:596px;top:1491px" width="24" height="28" viewBox="0 0 24 28"><path d="M11.9,25.7 L4.6,18.3 A10,10 0 1 1 19.2,18.3 Z" fill="#0b3640"/><circle cx="11.9" cy="11.9" r="3.4" fill="#fff"/></svg>
<div class="t" style="left:636.8px;top:1489.6px;font-size:28.6px;letter-spacing:1.92px;color:#102f35;">Cambridge Estates</div>
<div class="t" style="left:910.5px;top:1489.6px;font-size:28.6px;letter-spacing:1.12px;color:#0b3640;font-weight:700;">WD4002</div>
<svg class="a" style="left:1250px;top:1482px" width="38" height="44" viewBox="0 0 38 44"><circle cx="18.8" cy="12.5" r="10.4" fill="#0b3640"/><rect x="3.2" y="28.3" width="31.6" height="13.4" rx="11" ry="6.7" fill="#0b3640"/></svg>
<div class="t" style="left:1307.2px;top:1489.1px;font-size:29.8px;letter-spacing:0.68px;color:#0b3640;-webkit-text-stroke:0.55px #0b3640;">Penny Pinching</div>
<div class="a" style="left:1770px;top:1482px;width:166px;height:44px;background:#e8f6ef;border-radius:22px;"></div>
<svg class="a" style="left:1790px;top:1492px" width="26" height="26" viewBox="0 0 26 26"><g fill="#2bb86a"><circle cx="13" cy="12.3" r="8.4"/><circle cx="19.65" cy="15.06" r="3.4"/><circle cx="15.76" cy="18.95" r="3.4"/><circle cx="10.24" cy="18.95" r="3.4"/><circle cx="6.35" cy="15.06" r="3.4"/><circle cx="6.35" cy="9.54" r="3.4"/><circle cx="10.24" cy="5.65" r="3.4"/><circle cx="15.76" cy="5.65" r="3.4"/><circle cx="19.65" cy="9.54" r="3.4"/></g><path d="M9.3,12.3 L11.9,14.7 L16.7,9.5" fill="none" stroke="#fff" stroke-width="2.2" stroke-linecap="round" stroke-linejoin="round"/></svg>
<div class="t" style="left:1823.7px;top:1494.1px;font-size:19.86px;letter-spacing:-0.68px;color:#43b275;">REGULAR</div>
<svg class="a" style="left:2086px;top:1488px" width="32" height="32" viewBox="0 0 32 32"><circle cx="17" cy="15.8" r="13" fill="#0b3640"/><path d="M4.9,27.6 L6.5,19 L13,27 Z" fill="#0b3640"/><circle cx="10.8" cy="15.5" r="1.6" fill="#fff"/><circle cx="16.9" cy="15.5" r="1.6" fill="#fff"/><circle cx="23.2" cy="15.5" r="1.6" fill="#fff"/></svg>
<div class="a" style="left:2157px;top:1487px;width:48px;height:34px;background:#22c06b;border-radius:17px;"></div>
<div class="t" style="left:2157px;top:1492px;width:48px;text-align:center;font-size:24px;color:#f2fff7;">0</div>
<div class="t" style="left:3159.2px;top:1489.0px;font-size:29.3px;letter-spacing:1.20px;color:#102f35;">22 days ago</div>
<div class="a" style="left:32px;top:1563px;width:3242px;height:2px;background:#e9eaea;"></div>
<div class="a" style="left:-16px;top:719px;width:123px;height:123px;border-radius:50%;box-sizing:border-box;border:3px solid #17b565;background:rgba(30,200,115,0.64);"></div>
</body></html>
